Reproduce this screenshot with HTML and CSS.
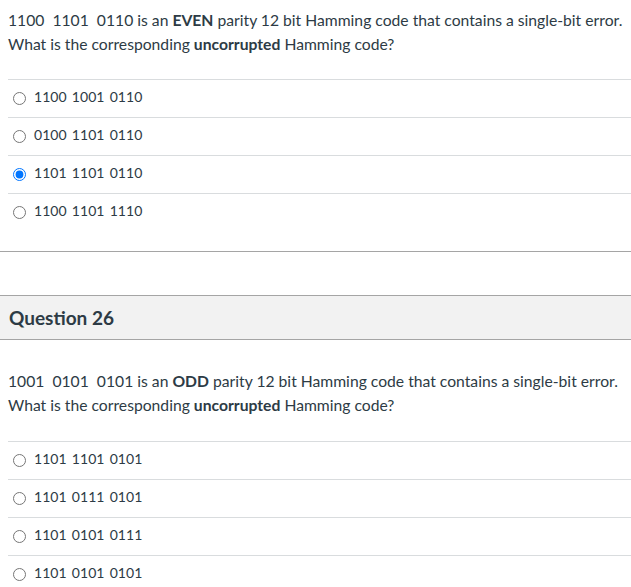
FILE: index.html
```html
<!DOCTYPE html>
<html>
<head>
<meta charset="utf-8">
<link rel="stylesheet" href="styles.css">
</head>
<body>
<div class="question">
  <div class="q-body">
    <p class="q-text">1100&nbsp; 1101&nbsp; 0110 is an <b>EVEN</b> parity 12 bit Hamming code that contains a single-bit error. What is the corresponding <b>uncorrupted</b> Hamming code?</p>
    <div class="answers">
      <label class="answer"><input type="radio" name="q25"><span>1100 1001 0110</span></label>
      <label class="answer"><input type="radio" name="q25"><span>0100 1101 0110</span></label>
      <label class="answer"><input type="radio" name="q25" checked><span>1101 1101 0110</span></label>
      <label class="answer"><input type="radio" name="q25"><span>1100 1101 1110</span></label>
    </div>
  </div>
</div>
<div class="question">
  <div class="q-header">Question 26</div>
  <div class="q-body spaced">
    <p class="q-text">1001&nbsp; 0101&nbsp; 0101 is an <b>ODD</b> parity 12 bit Hamming code that contains a single-bit error. What is the corresponding <b>uncorrupted</b> Hamming code?</p>
    <div class="answers">
      <label class="answer"><input type="radio" name="q26"><span>1101 1101 0101</span></label>
      <label class="answer"><input type="radio" name="q26"><span>1101 0111 0101</span></label>
      <label class="answer"><input type="radio" name="q26"><span>1101 0101 0111</span></label>
      <label class="answer"><input type="radio" name="q26"><span>1101 0101 0101</span></label>
    </div>
  </div>
</div>
</body>
</html>
```
FILE: styles.css
```css
html, body {
  margin: 0;
  padding: 0;
  background: #fff;
}
body {
  font-family: Lato, "Noto Sans", sans-serif;
  color: #2d3b45;
}
.question {
  width: 631px;
}
.q-body {
  padding: 8px 0 20px 8px;
}
.q-body.spaced {
  padding-top: 29px;
}
.q-text {
  margin: 0;
  font-size: 15.7px;
  line-height: 24px;
}
.q-text b {
  font-weight: 700;
}
.answers {
  margin-top: 23px;
}
.answer {
  display: flex;
  align-items: center;
  height: 37px;
  border-top: 1px solid #d9dcde;
  font-size: 14px;
  letter-spacing: 0.05px;
  word-spacing: 1.5px;
}
.answer input {
  margin: 0 8px 0 5px;
  width: 13px;
  height: 13px;
}
.answer span {
  position: relative;
  top: -2px;
}
.question + .question {
  border-top: 1px solid #a5a5a5;
  padding-top: 43px;
}
.q-header {
  height: 43px;
  background: #f2f2f2;
  border-top: 1px solid #a5a5a5;
  border-bottom: 1px solid #a5a5a5;
  padding-left: 9px;
  font-size: 19px;
  font-weight: 700;
  line-height: 43px;
}
.q-body.spaced .answers {
  margin-top: 24px;
}
```
